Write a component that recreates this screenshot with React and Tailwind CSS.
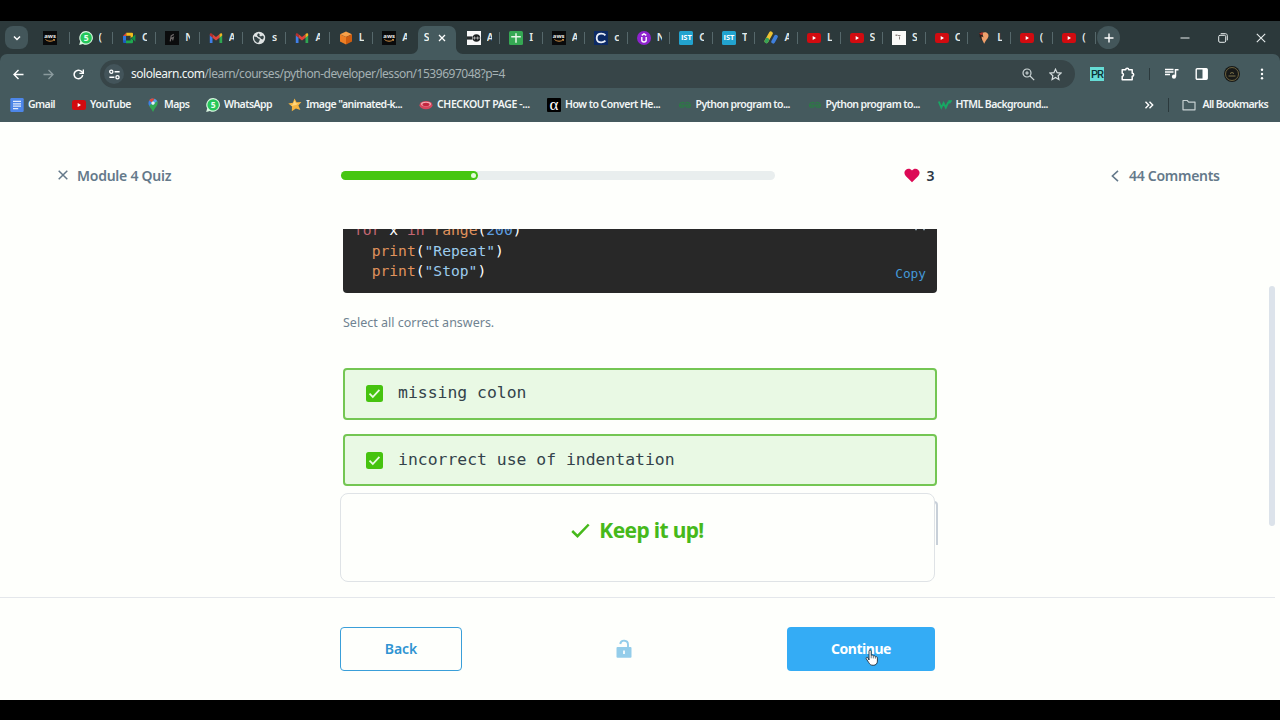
import React from "react";

const Svg = ({ className = "size-3.5", box = "0 0 14 14", children }) => (
  <svg className={`${className} shrink-0`} viewBox={box} fill="none">{children}</svg>
);

const Aws = () => (
  <span className="flex size-3.5 shrink-0 flex-col items-center justify-center bg-[#090a0b]">
    <span className="font-['Open_Sans',sans-serif] text-[6px] leading-[5px] font-bold text-[#e6e6e6]">aws</span>
    <Svg className="h-[3px] w-[10px]" box="0 0 10 3"><path d="M.5.5C3 2.7 7 2.7 9.5.7M8 .4h1.6v1.4" stroke="#d69245" /></Svg>
  </span>
);
const Whats = () => (
  <Svg>
    <path d="M7.2.1a6.8 6.8 0 1 1-3.3 12.8L.2 13.9l1-3.6A6.8 6.8 0 0 1 7.2.1Z" fill="#d9f6e1" />
    <circle cx="7.1" cy="6.9" r="5.7" fill="#25c65a" />
    <text x="7.1" y="9.9" textAnchor="middle" fontSize="8.5" fontWeight="700" fontFamily="Open Sans, sans-serif" fill="#e9fff0">5</text>
  </Svg>
);
const Meet = () => (
  <Svg>
    <path d="M1 5 4.3 1.8V5Z" fill="#e2463a" />
    <path d="M1 5h3v4.8H1Z" fill="#2c74e0" />
    <path d="M1 9.8h3V12H2a1 1 0 0 1-1-1Z" fill="#1a5cc0" />
    <path d="M4.3 1.8H10a1 1 0 0 1 1 1v2.6L8.6 7V4.7H4.3Z" fill="#f3bd1d" />
    <path d="M4 9.6h4.6V7L11 9v2.2a1 1 0 0 1-1 1H4Z" fill="#1fa850" />
    <path d="m9.5 7 3.9-3.6v7.4Z" fill="#159447" />
  </Svg>
);
const Dark = () => (
  <Svg><path d="M0 0h14v14H0Z" fill="#0b0c0d" /><path d="m5.2 10.4 1-5.6 2.6-1.4M6 7.6l2.4-1.2-.8 3" stroke="#6f6a6a" strokeWidth="1.2" /></Svg>
);
const Gmail = () => (
  <Svg>
    <path d="M.8 3.8v8.1h2.7V6Z" fill="#3f7fe8" />
    <path d="M13.2 3.8v8.1h-2.7V6Z" fill="#2fa652" />
    <path d="M3.5 3.2 7 6l3.5-2.8v3.5L7 9.5 3.5 6.7Z" fill="#e0433a" />
    <path d="M.8 3.6c0-1.7 1.5-1.8 2.7-.6v3.7L.8 4.6Z" fill="#b8302b" />
    <path d="M13.2 3.6c0-1.7-1.5-1.8-2.7-.6v3.7l2.7-2.1Z" fill="#eeb523" />
  </Svg>
);
const Globe = () => (
  <Svg>
    <circle cx="7" cy="7" r="6.2" fill="#dfe3e3" />
    <path d="M2 5.4 4.6 6l1.6 1.5 1.6.6-.4 1.8-1.3 2.2C3.4 11.6 1.9 9 2 5.4ZM6.2 2.2l1.6 1-.5 1.3 1.6.9 1.4-1 1.7 1.4-1 2.6-1.9-.5L8 6.4 6.3 6 5 4.2Z" fill="#364547" />
  </Svg>
);
const Cube = () => (
  <Svg>
    <path d="m7 .5 6 2.8L7 6 1 3.3Z" fill="#f7a048" />
    <path d="m1 3.3 6 2.7v7.6l-6-3Z" fill="#ee7f24" />
    <path d="m13 3.3-6 2.7v7.6l6-3Z" fill="#cf5d10" />
  </Svg>
);
const Plug = () => (
  <Svg>
    <path d="M0 0h14v14H0Z" fill="#f8f8f8" />
    <path d="M0 5.4h5.5v3.2H0Z" fill="#24292a" />
    <circle cx="9.4" cy="7" r="3.8" fill="#1c2021" />
    <path d="M5 7h8M7.5 5.5v3M10.6 5.5v3" stroke="#bbb" strokeWidth=".8" />
  </Svg>
);
const Sheet = () => (
  <Svg><rect width="14" height="14" rx="1.5" fill="#35a853" /><path d="M7 2.2v9.6M2.2 5.7h9.6" stroke="#e8f6ea" strokeWidth="1.5" /></Svg>
);
const Cour = () => (
  <Svg><path d="M0 0h14v14H0Z" fill="#0c2a66" /><path d="M11.4 4.4C10.3 3 8.9 2.6 7.3 2.6 4.5 2.6 2.7 4.5 2.7 7s1.8 4.4 4.6 4.4c1.6 0 3-.5 4.1-1.8" stroke="#e8edf6" strokeWidth="1.8" /></Svg>
);
const Udemy = () => (
  <Svg><circle cx="7" cy="7" r="7" fill="#8f22cf" /><path d="M4.8 6v3c0 2.7 4.4 2.7 4.4 0V6M4.7 4.3 7 2.9l2.3 1.4" stroke="#fff" strokeWidth="1.4" /></Svg>
);
const Ist = () => (
  <span className="flex size-3.5 shrink-0 items-center justify-center rounded-[1.5px] bg-[#22a3cf] font-['Open_Sans',sans-serif] text-[7.5px] font-bold text-white">IST</span>
);
const Ads = () => (
  <Svg>
    <path d="M6.9 2.3 2.4 10.2" stroke="#eec232" strokeWidth="3.8" strokeLinecap="round" />
    <path d="m3.2 8.8-.8 1.6" stroke="#36a457" strokeWidth="3.8" strokeLinecap="round" />
    <path d="m11.9 5.7-2.7 5" stroke="#3f7fdd" strokeWidth="3.8" strokeLinecap="round" />
  </Svg>
);
const Yt = () => (
  <Svg><rect y="2" width="14" height="10" rx="2.3" fill="#d20b10" /><path d="M5.7 5.1v3.8L9 7Z" fill="#fff" /></Svg>
);
const Paper = () => (
  <Svg><path d="M0 0h14v14H0Z" fill="#fafaf8" /><path d="M3.5 3.5h2v1.6h-2ZM6 4h2.5v1H6ZM7 5.5h1v3H7Z" fill="#8d8583" /></Svg>
);
const Flame = () => (
  <Svg><path d="M2.5 1.8 6 1.2l-1 8.6-2.3-4Z" fill="#2b1815" /><path d="M5.2 2c3-2 7 0 6.2 3.4-.5 2.4-3.2 4.1-4.2 7.3C6 10 4.2 8 4.6 5.2l1.9 1.2Z" fill="#f0a06b" /><path d="M2.2 2.5 5.6 1.1 6 3.6 4 4Z" fill="#b3362c" /></Svg>
);
const Docs = () => (
  <Svg><rect x=".3" width="13.4" height="14" rx="1.2" fill="#4d86e8" /><path d="M3 3.4h8M3 5.8h8M3 8.2h8M3 10.6h5.2" stroke="#e4edfc" strokeWidth="1.2" /></Svg>
);
const Pin = () => (
  <Svg>
    <path d="M7 .5a4.6 4.6 0 0 0-4.6 4.7c0 1.1.4 2 .9 2.8L7 3.6Z" fill="#3b80e6" />
    <path d="M3.2 2.2 5.7 4.4 8.6.8C6.5.1 4.3.7 3.2 2.2Z" fill="#e0483a" />
    <path d="M8.6.8a4.7 4.7 0 0 1 2.9 3.3L7.2 9.2 3.3 8 5.8 5.1Z" fill="#57a2e9" />
    <path d="m3.3 8 2-2.3C6.5 7.8 8.3 6.8 8.7 5l2.5-2c.9 2 .3 3.9-.9 5.5C9 10.2 8 11.5 7.5 13.5H6.6C6.1 11.3 4.3 10 3.3 8Z" fill="#32a853" />
    <circle cx="7" cy="5.1" r="1.7" fill="#e9f1ee" />
  </Svg>
);
const Star = () => (
  <Svg><path d="M6.5.4 8.6 4.3l4.8-.4-3 3.7 2 4.4-4.5-1.4L3.8 13.3l.2-4.9L.3 5.6l4.6-.8Z" fill="#f6b43f" /><path d="M6.5 2.5 8 5.2l2.5.2L8 7 3 8l2-2Z" fill="#ffd77e" /></Svg>
);
const Dish = () => (
  <Svg><ellipse cx="7" cy="7.2" rx="6.5" ry="4.1" fill="#d6455c" /><ellipse cx="7" cy="6" rx="5" ry="2.3" fill="#f3aab2" /><ellipse cx="7" cy="6.4" rx="3.6" ry="1.6" fill="#c2263f" /></Svg>
);
const Alpha = () => (
  <span className="flex size-3.5 shrink-0 items-center justify-center rounded-[1px] bg-black pb-[2px] font-['Liberation_Serif',serif] text-[17px] leading-none font-normal text-white">α</span>
);
const Gfg = () => (
  <Svg><path d="M6.5 5.2C4.6 3.7 1.5 4.7 1.5 7.2c0 2.6 4.5 2.8 4.7 0H2M7.500 5.2c1.9-1.5 5-.5 5 2 0 2.6-4.5 2.8-4.7 0H12" stroke="#2c7a45" strokeWidth="1.2" /></Svg>
);
const W3 = () => (
  <Svg><path d="m.8 3.5 2.5 6L5.6 5l2.2 4.5L10.400 4M10.3 3.2h2.4l-1.5 2" stroke="#18a763" strokeWidth="1.9" /></Svg>
);

const tabsLeft = [[Whats, "("], [Meet, "C"], [Dark, "N"], [Gmail, "A"], [Globe, "s"], [Gmail, "A"], [Cube, "L"], [Aws, "A"]];
const tabsRight = [[Plug, "A"], [Sheet, "I"], [Aws, "A"], [Cour, "c"], [Udemy, "N"], [Ist, "C"], [Ist, "T"], [Ads, "A"], [Yt, "L"], [Yt, "S"], [Paper, "S"], [Yt, "C"], [Flame, "L"], [Yt, "("], [Yt, "("]];

const Tab = ({ Icon, label, width, last }) => (
  <div className={`flex h-[22px] shrink-0 items-center ${width}`}>
    <div className="flex flex-1 items-center gap-1.5 pl-[9px]">
      <Icon />
      <span className="w-[5px] overflow-hidden text-[10.5px] font-semibold whitespace-nowrap text-[#e4eaea]">{label}</span>
    </div>
    {!last && <span className="h-3 w-px bg-[#56686b]" />}
  </div>
);

const bookmarks = [
  [Docs, "Gmail", "w-[62px]", "tracking-[-0.55px]"],
  [Yt, "YouTube", "w-[74px]", "tracking-[-0.4px]"],
  [Pin, "Maps", "w-[60px]", "tracking-[-0.55px]"],
  [Whats, "WhatsApp", "w-[82px]", "tracking-[-0.55px]"],
  [Star, "Image \"animated-k...", "w-[131px]", "tracking-[-0.55px]"],
  [Dish, "CHECKOUT PAGE -...", "w-[128px]", "tracking-[-0.38px]"],
  [Alpha, "How to Convert He...", "w-[130.5px]", "tracking-[-0.5px]"],
  [Gfg, "Python program to...", "w-[130px]", "tracking-[-0.57px]"],
  [Gfg, "Python program to...", "w-[130px]", "tracking-[-0.57px]"],
  [W3, "HTML Background...", "w-[130px]", "tracking-[-0.57px]"],
];

const TabStrip = () => (
  <div className="flex h-[33px] items-start bg-[#2c393b]">
    <div className="ml-[5px] mt-[5px] flex size-[23px] shrink-0 items-center justify-center rounded-[8px] bg-[#43565a]">
      <Svg className="size-2.5" box="0 0 10 10"><path d="m2 3.5 3 3 3-3" stroke="#fff" strokeWidth="1.5" /></Svg>
    </div>
    <div className="mt-[5.5px] ml-[15px] flex h-[22px] w-[26.5px] shrink-0 items-center justify-between"><Aws /><span className="h-3 w-px bg-[#56686b]" /></div>
    <div className="mt-[5.5px] flex">
      {tabsLeft.map(([Icon, label], i) => <Tab key={i} Icon={Icon} label={label} width="w-[43.4px]" last={i === 7} />)}
    </div>
    <div className="-ml-[6px] mt-[5px] flex h-7 w-[52px] shrink-0 items-end">
      <Svg className="h-[7px] w-[7px]" box="0 0 7 7"><path d="M7 0v7H0c4 0 7-3 7-7Z" fill="#455a5e" /></Svg>
      <div className="flex h-7 flex-1 items-center justify-between rounded-t-[7px] bg-[#455a5e] pr-[10px] pb-1 pl-[6px]">
        <span className="w-[5px] overflow-hidden text-[10.5px] font-semibold text-[#eef3f3]">S</span>
        <Svg className="size-2" box="0 0 8 8"><path d="m1 1 6 6M7 1 1 7" stroke="#fff" strokeWidth="1.3" /></Svg>
      </div>
      <Svg className="h-[7px] w-[7px]" box="0 0 7 7"><path d="M0 0v7h7C3 7 0 4 0 0Z" fill="#455a5e" /></Svg>
    </div>
    <div className="-ml-[5px] mt-[5.5px] flex">
      {tabsRight.map(([Icon, label], i) => <Tab key={i} Icon={Icon} label={label} width="w-[42.55px]" />)}
    </div>
    <div className="mt-[5px] ml-[1.5px] flex size-[23px] shrink-0 items-center justify-center rounded-full bg-[#43565a]">
      <Svg className="size-2.5" box="0 0 10 10"><path d="M5 .5v9M.5 5h9" stroke="#fff" strokeWidth="1.4" /></Svg>
    </div>
    <div className="mt-3 mr-[14px] ml-auto flex items-center gap-7">
      <Svg className="size-2.5" box="0 0 10 10"><path d="M.5 5h9" stroke="#e8eeee" /></Svg>
      <Svg className="size-2.5" box="0 0 10 10"><rect x=".7" y="2.3" width="7" height="7" rx="1.3" stroke="#e8eeee" /><path d="M2.7.7h4.8c1 0 1.8.8 1.8 1.8v4.8" stroke="#e8eeee" /></Svg>
      <Svg className="size-2.5" box="0 0 10 10"><path d="m.8.8 8.4 8.4M9.2.8.8 9.2" stroke="#e8eeee" strokeWidth="1.1" /></Svg>
    </div>
  </div>
);

const Toolbar = () => (
  <div className="flex h-[39px] items-center pt-px">
    <div className="ml-[13px] flex w-[87px] shrink-0 items-center gap-[19px]">
      <Svg className="size-[11px]" box="0 0 11 11"><path d="M10.5 5.5H1M5.5 1 1 5.5 5.5 10" stroke="#fff" strokeWidth="1.4" /></Svg>
      <Svg className="size-[11px]" box="0 0 11 11"><path d="M.5 5.5H10M5.5 1 10 5.5 5.5 10" stroke="#8b9b9e" strokeWidth="1.3" /></Svg>
      <Svg className="size-[11px]" box="0 0 11 11"><path d="M9.7 6.2A4.3 4.3 0 1 1 8.6 2.5L10 4" stroke="#fff" strokeWidth="1.5" /><path d="M10.3.4v4H6.4" stroke="#fff" strokeWidth="1.4" /></Svg>
    </div>
    <div className="flex h-7 w-[975px] shrink-0 items-center rounded-full bg-[#374548] pr-[13px] pl-1">
      <div className="flex size-5 items-center justify-center rounded-full bg-[#43545a]">
        <Svg className="size-[11px]" box="0 0 11 11"><circle cx="2.3" cy="2.7" r="1.6" stroke="#fff" strokeWidth="1.3" /><path d="M5.6 2.7h5M.4 8.2h5" stroke="#fff" strokeWidth="1.4" /><circle cx="8.5" cy="8.2" r="1.6" stroke="#fff" strokeWidth="1.3" /></Svg>
      </div>
      <div className="ml-[7px] flex-1 text-[12px] tracking-[-0.48px] whitespace-nowrap text-[#a5b1b3]"><span className="text-[#f1f5f5]">sololearn.com</span>/learn/courses/python-developer/lesson/1539697048?p=4</div>
      <Svg className="mr-3.5 size-[13px]" box="0 0 13 13"><circle cx="5" cy="5" r="4" stroke="#cfd8d9" strokeWidth="1.2" /><path d="m8 8 4.2 4.2M5 3.2v3.6M3.2 5h3.6" stroke="#cfd8d9" strokeWidth="1.2" /></Svg>
      <Svg className="size-[13px]" box="0 0 13 13"><path d="m6.5 1.2 1.6 3.5 3.9.4-2.9 2.6.8 3.8-3.4-2-3.4 2 .8-3.8L1 5.1l3.9-.4Z" stroke="#d7dfe0" strokeWidth="1.2" /></Svg>
    </div>
    <div className="ml-[15px] flex size-3.5 shrink-0 items-center justify-center bg-[#66dcd5] font-['Roboto',sans-serif] text-[11px] leading-none font-medium tracking-[-1px] text-[#0d3236]">PR</div>
    <Svg className="ml-[17px] size-3.5" box="0 0 14 14"><path d="M1.2 2.7h3.5a1.5 1.5 0 0 1 3 0h3.5v3.5a1.5 1.5 0 0 1 0 3v3.5h-10V9.5a1.7 1.7 0 0 0 0-3.3Z" stroke="#fff" strokeWidth="1.5" strokeLinejoin="round" /></Svg>
    <span className="ml-[14px] h-3 w-px bg-[#2b393c]" />
    <Svg className="ml-[15px] size-3.5" box="0 0 14 14"><path d="M0 2.5h8.5M0 5h8.5M0 7.5h5" stroke="#fff" strokeWidth="1.4" /><path d="M10.5 9.5V2.7h3" stroke="#fff" strokeWidth="1.5" /><circle cx="9" cy="9.7" r="2.1" fill="#fff" /></Svg>
    <Svg className="ml-[16px] size-3.5" box="0 0 14 14"><rect x="1.2" y="1.7" width="11" height="10.6" rx="1" stroke="#fff" strokeWidth="1.4" /><path d="M7.5 1.7h4.7v10.6H7.5Z" fill="#fff" /></Svg>
    <Svg className="ml-[15px] size-4" box="0 0 16 16"><circle cx="8" cy="8" r="8" fill="#171918" /><circle cx="8" cy="8" r="6.5" stroke="#756a43" strokeWidth=".9" /><path d="M4.5 10h7M6 7.5l2-1 2 1" stroke="#8b8050" strokeWidth=".9" /></Svg>
    <Svg className="ml-[20px] h-3 w-[4px]" box="0 0 4 12"><circle cx="2" cy="1.8" r="1.2" fill="#fff" /><circle cx="2" cy="6" r="1.2" fill="#fff" /><circle cx="2" cy="10.2" r="1.2" fill="#fff" /></Svg>
  </div>
);

const BookmarkBar = () => (
  <div className="flex h-[29px] items-center pl-2.5 pb-[5px] text-[10.5px] font-semibold text-[#f1f5f5]">
    {bookmarks.map(([Icon, label, width, track], i) => (
      <div key={i} className={`flex shrink-0 items-center gap-1 whitespace-nowrap ${width}`}><Icon /><span className={track}>{label}</span></div>
    ))}
    <Svg className="ml-[76px] size-2.5" box="0 0 10 10"><path d="m1.5 1.8 3.2 3.2-3.2 3.2M5.5 1.8 8.7 5 5.5 8.2" stroke="#fff" strokeWidth="1.4" /></Svg>
    <span className="ml-[14px] h-3.5 w-px shrink-0 bg-[#2b393c]" />
    <Svg className="ml-[13px] size-3.5" box="0 0 14 14"><path d="M1 2.5h4.2l1.5 1.6H13v7.7H1Z" stroke="#c6d0d1" strokeWidth="1.2" strokeLinejoin="round" /></Svg>
    <span className="ml-[7px] tracking-[-0.65px] whitespace-nowrap">All Bookmarks</span>
  </div>
);

const Option = ({ label }) => (
  <div className="flex h-[52px] shrink-0 items-center rounded-[4px] border-2 border-[#74c653] bg-[#e9f9e4] pl-[21px]">
    <Svg className="size-[17px]" box="0 0 17 17"><rect width="17" height="17" rx="2.5" fill="#46c30f" /><path d="m3.5 8.7 3.300 3.300L13.400 4.800" stroke="#e9fbe2" strokeWidth="1.8" /></Svg>
    <span className="ml-[15px] font-['DejaVu_Sans_Mono',monospace] text-[16.42px] text-[#33424a]">{label}</span>
  </div>
);

export default function App() {
  return (
    <div className="flex h-[720px] w-[1280px] flex-col overflow-hidden bg-black pt-[21px] font-['Noto_Sans','Open_Sans',sans-serif]">
      <TabStrip />
      <div className="bg-[#2c393b]">
        <div className="h-[68px] rounded-t-[7px] bg-[#455a5e]">
          <Toolbar />
          <BookmarkBar />
        </div>
      </div>
      <main className="relative flex h-[578px] flex-col bg-[#fefffc]">
        <header className="flex h-[107px] shrink-0 items-center text-[14px] font-semibold text-[#64798a]">
          <div className="flex w-[341px] items-center pb-px pl-[58px]">
            <Svg className="size-[10px]" box="0 0 10 10"><path d="m.7.7 8.6 8.6M9.3.7.7 9.3" stroke="#64798a" strokeWidth="1.5" /></Svg>
            <span className="ml-[9px] tracking-[-0.25px]">Module 4 Quiz</span>
          </div>
          <div className="h-[9px] w-[434px] rounded-full bg-[#e9eeee]">
            <div className="flex h-full w-[137px] items-center justify-end rounded-full bg-[#46c611] pr-0.5"><span className="size-[5px] rounded-full bg-[#e4fbdb]" /></div>
          </div>
          <Svg className="ml-[129px] h-[15px] w-4" box="0 0 16 15"><path d="M8 14.3 1.7 8C-2.5 3.2 4.5-2.3 8 2.5 11.5-2.3 18.5 3.2 14.3 8Z" fill="#dc0a55" /></Svg>
          <span className="ml-[6.5px] w-[184.5px] text-[#2d3846]">3</span>
          <Svg className="h-3 w-2" box="0 0 8 12"><path d="M7 .8 1.4 6 7 11.2" stroke="#64798a" strokeWidth="1.6" /></Svg>
          <span className="ml-[10px] pb-px tracking-[-0.28px] whitespace-nowrap">44 Comments</span>
        </header>
        <section className="ml-[343px] flex h-[316px] w-[595px] shrink-0 flex-col overflow-hidden">
          <div className="flex h-[64px] w-[594px] shrink-0 justify-between overflow-hidden rounded-b-[4px] bg-[#282828] pr-[11px] pl-[11px]">
            <pre className="-mt-[9px] font-['DejaVu_Sans_Mono',monospace] text-[14.65px] leading-[20.5px] text-white"><span className="text-[#c46673]">for</span> x <span className="text-[#c46673]">in</span> <span className="text-[#e0935d]">range</span>(<span className="text-[#5e9fe0]">200</span>){"\n  "}<span className="text-[#e0935d]">print</span>(<span className="text-[#9cccee]">"Repeat"</span>){"\n  "}<span className="text-[#e0935d]">print</span>(<span className="text-[#9cccee]">"Stop"</span>)</pre>
            <div className="flex flex-col items-end justify-between pb-[9px] font-['DejaVu_Sans_Mono',monospace] text-[12.8px] leading-5 text-[#4499d8]">
              <Svg className="h-[2px] w-[11px]" box="0 0 11 2"><path d="M0 .7h2M8 .7h2" stroke="#9fb7c4" /></Svg>
              <span>Copy</span>
            </div>
          </div>
          <p className="mt-[20px] h-5 text-[12.5px] leading-5 text-[#708391]">Select all correct answers.</p>
          <div className="mt-[34.5px] flex w-[594px] flex-col gap-[14.5px]">
            <Option label="missing colon" />
            <Option label="incorrect use of indentation" />
            <div className="-mr-px h-[52px] rounded-[4px] border-2 border-[#c8d0d8]" />
          </div>
        </section>
        <div className="absolute top-[371px] left-[340px] flex h-[89px] w-[595px] justify-center rounded-[8px] border border-[#dfe3e6] bg-[#fefffc] pt-[20px]">
          <div className="flex h-8 items-center gap-[9px]">
            <Svg className="h-[15px] w-[19px]" box="0 0 19 15"><path d="m1.2 8 5.3 5.2L17.7 1.5" stroke="#46b91b" strokeWidth="2.5" /></Svg>
            <span className="text-[21px] leading-8 font-bold tracking-[-0.65px] text-[#46b91b]">Keep it up!</span>
          </div>
        </div>
        <footer className="mt-[52px] flex h-[103px] w-[1275px] items-start border-t border-[#e4e7eb] pt-[29px] pl-[340px] text-[14px]">
          <button className="h-[44px] w-[122px] rounded-[4px] border border-[#3a9fd9] pb-px font-semibold tracking-[-0.1px] text-[#3094d2]">Back</button>
          <Svg className="mt-[12px] ml-[154px] h-[19px] w-4" box="0 0 16 19"><path d="M4.200 5C5 .2 12 .8 12 5.500V8.500" stroke="#94cdea" strokeWidth="1.9" /><rect x=".5" y="8" width="15" height="10.7" rx="1" fill="#94cdea" /><path d="M8 11.4v3.5" stroke="#fff" strokeWidth="1.7" /></Svg>
          <button className="ml-[155px] h-[44px] w-[148px] rounded-[4px] bg-[#34acf5] pb-px font-bold tracking-[-0.45px] text-white">Continue</button>
        </footer>
        <div className="absolute top-[164px] right-[5px] h-[240px] w-1.5 rounded-sm bg-[#dce3ea]" />
        <svg className="absolute top-[527px] left-[865px] h-[17px] w-[14px]" viewBox="0 0 14 17" fill="none">
          <path d="M4 11V2.2c0-1.6 2.2-1.6 2.2 0v4c1-.5 2 0 2.1.7 1-.4 1.9 0 2.1.8 1.1-.3 2 .2 2 1.4v3c0 2.6-1.5 4.2-4.2 4.2-2.5 0-3.5-1-4.6-2.9L1.2 9.7c-.5-1.3 1-2 1.8-.8Z" fill="#fff" stroke="#1d2b38" strokeWidth=".9" />
          <path d="M6.2 6v3.3M8.3 7v2.4M10.4 8v1.6" stroke="#31404d" strokeWidth=".7" />
        </svg>
      </main>
    </div>
  );
}
